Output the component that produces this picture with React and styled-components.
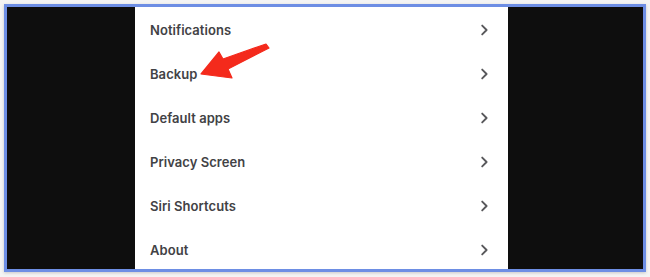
import React from "react";
import styled, { createGlobalStyle } from "styled-components";

const Global = createGlobalStyle`
  html, body { margin: 0; padding: 0; background: #ffffff; }
  body { font-family: Inter, "Noto Sans", sans-serif; }
`;

const Page = styled.div`
  width: 650px;
  height: 277px;
  padding: 4px;
  box-sizing: border-box;
  background: #f4f4f4;
`;

const Frame = styled.div`
  position: relative;
  width: 642px;
  height: 268px;
  box-sizing: border-box;
  border: 3px solid #6d8ee4;
  box-shadow: 0 1px 3px rgba(0, 0, 0, 0.18);
  display: grid;
  grid-template-columns: 128px 373px 1fr;
  overflow: hidden;
  background: #0e0e0e;
`;

const Side = styled.div`
  background: #0e0e0e;
`;

const Panel = styled.div`
  background: #ffffff;
  padding-top: 1px;
  display: flex;
  flex-direction: column;
  overflow: hidden;
`;

const Row = styled.div`
  flex: 0 0 44px;
  display: flex;
  align-items: center;
  justify-content: space-between;
  padding: 0 19px 0 15px;
`;

const Label = styled.span`
  font-size: 13px;
  font-weight: 600;
  color: #424245;
  letter-spacing: 0.05px;
`;

const Chevron = () => (
  <svg width="9" height="12" viewBox="0 0 9 12">
    <path d="M2.2 1.6 L6.6 6 L2.2 10.4" fill="none" stroke="#58585b" strokeWidth="1.9" strokeLinecap="round" strokeLinejoin="round" />
  </svg>
);

const ArrowLayer = styled.svg`
  position: absolute;
  left: -7px;
  top: -7px;
  pointer-events: none;
`;

const items = ["Notifications", "Backup", "Default apps", "Privacy Screen", "Siri Shortcuts", "About"];

export default function App() {
  return (
    <>
      <Global />
      <Page>
        <Frame>
          <Side />
          <Panel>
            {items.map((t) => (
              <Row key={t}>
                <Label>{t}</Label>
                <Chevron />
              </Row>
            ))}
          </Panel>
          <Side />
          <ArrowLayer width="650" height="277" viewBox="0 0 650 277">
            <polygon
              points="201,74 219,52 223,59 266,44 269,48 228,69 232,78"
              fill="#f42a1c"
              stroke="#f42a1c"
              strokeWidth="1.2"
              strokeLinejoin="round"
            />
          </ArrowLayer>
        </Frame>
      </Page>
    </>
  );
}
